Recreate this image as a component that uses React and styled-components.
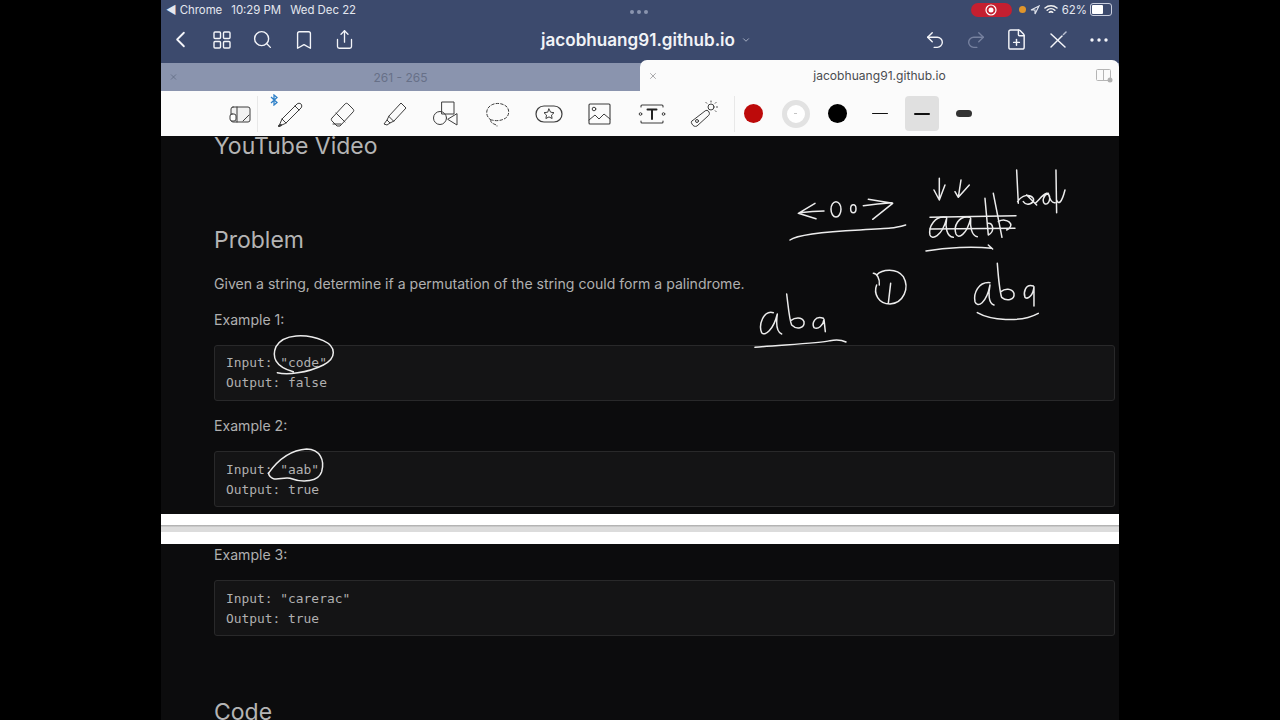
import React from "react";
import styled, { createGlobalStyle } from "styled-components";
import { ChevronLeft, Search, Bookmark, Share, Undo2, Redo2, FilePlus, X, ChevronDown } from "lucide-react";

const Global = createGlobalStyle`
    html, body { margin: 0; padding: 0; background: #000; }
    body { font-family: "Inter", "Liberation Sans", sans-serif; overflow: hidden; }
`;

const Screen = styled.div`
    width: 958px;
    height: 720px;
    margin: 0 auto;
    display: flex;
    flex-direction: column;
    overflow: hidden;
`;

const StatusBar = styled.div`
    height: 20px;
    flex: none;
    box-sizing: border-box;
    background: #3c4a6d;
    color: #e4e7ef;
    font-size: 11.4px;
    display: grid;
    grid-template-columns: 1fr auto 1fr;
    align-items: center;
    padding: 0 7px 1px 5px;
`;
const StatusLeft = styled.div`
    display: flex;
    gap: 9px;
    white-space: nowrap;
`;
const StatusRight = styled.div`
    display: flex;
    justify-content: flex-end;
    align-items: center;
    gap: 4px;
`;
const Dots = styled.div`
    display: flex;
    gap: 3px;
    margin-top: 5px;
    span {
        width: 4px;
        height: 4px;
        border-radius: 50%;
        background: #8a94ae;
    }
`;
const RecordPill = styled.div`
    width: 41px;
    height: 14px;
    border-radius: 7px;
    background: #c41f30;
    display: flex;
    align-items: center;
    justify-content: center;
    margin-right: 3px;
`;
const OrangeDot = styled.div`
    width: 7px;
    height: 7px;
    border-radius: 50%;
    background: #e0952b;
`;
const Battery = styled.div`
    width: 18px;
    height: 9px;
    border: 1px solid #c9cede;
    border-radius: 3px;
    padding: 1px;
    box-sizing: content-box;
    margin-left: -1px;
    div {
        width: 62%;
        height: 100%;
        background: #fff;
        border-radius: 1px;
    }
`;

const NavBar = styled.div`
    height: 43px;
    flex: none;
    box-sizing: border-box;
    padding-bottom: 4px;
    background: #3c4a6d;
    display: grid;
    grid-template-columns: 1fr auto 1fr;
    align-items: center;
    color: #fff;
`;
const NavGroup = styled.div`
    display: flex;
    justify-content: ${(p) => (p.$end ? "flex-end" : "flex-start")};
    margin-left: ${(p) => (p.$end ? 0 : -1)}px;
`;
const NavIcon = styled.div`
    width: 41px;
    height: 30px;
    display: flex;
    align-items: center;
    justify-content: center;
    color: ${(p) => (p.$dim ? "#76819f" : "#f4f5f9")};
`;
const Title = styled.div`
    font-size: 17.1px;
    font-weight: 600;
    color: #f1f3f7;
    display: flex;
    align-items: center;
    gap: 6px;
    margin-left: 12px;
`;

const TabRow = styled.div`
    height: 28px;
    flex: none;
    background: #8a94ae;
    display: grid;
    grid-template-columns: 479px 479px;
`;
const Tab = styled.div`
    position: relative;
    font-size: ${(p) => (p.$active ? "12.1px" : "12px")};
    display: flex;
    align-items: center;
    justify-content: center;
    color: ${(p) => (p.$active ? "#4a4c50" : "#677088")};
    background: ${(p) => (p.$active ? "#fbfbfb" : "transparent")};
    border-radius: ${(p) => (p.$active ? "7px 7px 0 0" : "0")};
    margin-top: ${(p) => (p.$active ? "-3px" : "0")};
`;
const TabClose = styled.span`
    position: absolute;
    left: 8px;
    top: 50%;
    transform: translateY(-50%);
    display: flex;
    color: ${(p) => (p.$active ? "#9a9a9c" : "#5f6880")};
`;
const SplitIcon = styled.svg`
    position: absolute;
    right: 6px;
    top: 8px;
`;

const ToolBar = styled.div`
    height: 45px;
    flex: none;
    background: #fbfbfb;
    display: flex;
    align-items: center;
    padding-left: 52px;
`;
const Tool = styled.div`
    position: relative;
    width: 51.67px;
    height: 36px;
    display: flex;
    align-items: center;
    justify-content: center;
    &::after {
        content: "";
        display: ${(p) => (p.$rule === undefined ? "none" : "block")};
        position: absolute;
        top: 0;
        bottom: 0;
        right: ${(p) => p.$rule}px;
        width: 1px;
        background: #e8e8e8;
    }
`;
const BlueTooth = styled.svg`
    position: absolute;
    left: 5px;
    top: -2px;
`;
const Swatches = styled.div`
    display: flex;
    margin-left: 3px;
`;
const Swatch = styled.div`
    width: 34px;
    height: 35px;
    margin: 0 4px;
    display: flex;
    align-items: center;
    justify-content: center;
    border-radius: 4px;
    background: ${(p) => (p.$selected ? "#e0e0e0" : "transparent")};
`;
const Dot = styled.div`
    width: 19px;
    height: 19px;
    border-radius: 50%;
    background: ${(p) => p.$color};
`;
const Ring = styled.div`
    width: 18px;
    height: 18px;
    border-radius: 50%;
    background: #fff;
    border: 5px solid #e2e2e2;
    display: flex;
    align-items: center;
    justify-content: center;
    &::before {
        content: "";
        width: 3px;
        height: 1px;
        background: #c4c4c4;
    }
`;
const Stroke = styled.div`
    width: ${(p) => p.$w}px;
    height: ${(p) => p.$h}px;
    border-radius: ${(p) => p.$h / 2}px;
    background: ${(p) => p.$color || "#111"};
`;

const Sheet = styled.div`
    position: relative;
    height: ${(p) => p.$h}px;
    flex: none;
    overflow: hidden;
    background: #0c0c0d;
    padding: 0 4px 0 53px;
    box-sizing: border-box;
`;
const Heading = styled.div`
    font-size: 23px;
    line-height: 30px;
    color: #b4b4b4;
    margin-top: ${(p) => p.$top}px;
`;
const Para = styled.div`
    font-size: 14.08px;
    line-height: 20px;
    color: #b0b0b0;
    margin-top: ${(p) => p.$top}px;
`;
const CodeBox = styled.pre`
    margin: ${(p) => p.$top}px 0 0;
    height: 56px;
    box-sizing: border-box;
    padding: ${(p) => p.$pad}px 11px 0;
    background: #141415;
    border: 1px solid #29292a;
    border-radius: 3px;
    font-family: "DejaVu Sans Mono", "Liberation Mono", monospace;
    font-size: 12.9px;
    line-height: 20px;
    color: #b0b0b0;
`;
const Ink = styled.svg`
    position: absolute;
    left: 0;
    top: 0;
    fill: none;
    stroke: #ececec;
    stroke-linecap: round;
    stroke-linejoin: round;
    pointer-events: none;
`;

const PageBreak = styled.div`
    height: 30px;
    flex: none;
    background: #fff;
    display: flex;
    flex-direction: column;
    padding-top: 11px;
    box-sizing: border-box;
    div {
        height: 7px;
        background: linear-gradient(#a9a9a9, #dcdcdc 35%, #dcdcdc);
    }
`;

const GridIcon = () => (
    <svg width="18" height="18" viewBox="0 0 18 18" fill="none" stroke="currentColor" strokeWidth="1.4">
        <rect x="1" y="1" width="6.5" height="6.5" rx="1" />
        <rect x="10.5" y="1" width="6.5" height="6.5" rx="1" />
        <rect x="1" y="10.5" width="6.5" height="6.5" rx="1" />
        <rect x="10.5" y="10.5" width="6.5" height="6.5" rx="1" />
    </svg>
);

const MoreIcon = () => (
    <svg width="18" height="4" viewBox="0 0 18 4" fill="currentColor">
        <circle cx="2" cy="2" r="1.7" />
        <circle cx="9" cy="2" r="1.7" />
        <circle cx="16" cy="2" r="1.7" />
    </svg>
);

const CrossIcon = () => (
    <svg width="18" height="18" viewBox="0 0 18 18" fill="none" stroke="currentColor" strokeWidth="1.5" strokeLinecap="round">
        <path d="M2 3 L16 16" />
        <path d="M2 16 L13 5" />
        <path d="M14.5 3.5 L17 1" stroke="#b9c0d2" />
    </svg>
);

const ToolIcon = ({ children }) => (
    <svg width="28" height="28" viewBox="0 0 28 28" fill="none" stroke="#3d3d3d" strokeWidth="1" strokeLinecap="round" strokeLinejoin="round">
        {children}
    </svg>
);

const Scribbles = () => (
    <Ink width="958" height="378" viewBox="161 136 958 378">
        <g transform="translate(740 160) scale(.3333)" strokeWidth="4.5">
            <path d="M225 130L175 160L228 176M178 158C200 156 225 154 252 153" />
            <ellipse cx="288" cy="148" rx="15" ry="23" />
            <ellipse cx="340" cy="146" rx="8" ry="12" />
            <path d="M370 137C400 133 430 130 456 128M385 118L458 130L398 178" />
            <path d="M150 240C170 225 260 215 360 210S460 205 497 195" />
            <path d="M598 55L598 118M582 90L598 120L615 75M663 60L655 112M645 95L655 112L688 75" />
            <path d="M620 172C585 165 565 200 570 225C575 240 605 232 620 175C615 200 620 230 640 232" />
            <path d="M690 172C655 165 640 200 648 222C655 238 680 225 692 175C690 200 695 228 712 230" />
            <path d="M735 115L745 225M745 190C760 190 765 215 745 225M760 100L786 232M775 185C800 170 830 195 800 210" />
            <path d="M570 172L828 167M570 207L825 205" />
            <path d="M558 273C620 262 700 258 755 265M745 255L758 267" />
            <path d="M830 30L835 130M833 125C845 105 870 100 880 115C885 130 860 140 850 125M860 105L890 135M885 130C895 125 905 105 920 100C935 105 930 135 915 132C905 125 910 105 925 100C930 120 935 130 945 128M948 30L950 158M950 120C955 135 965 130 975 90" />
            <path d="M410 345C425 328 470 322 490 350C510 385 490 430 450 432C415 432 400 400 410 375M400 340C410 340 420 355 418 375M452 370L445 430" />
            <path d="M750 368C715 365 700 400 705 425C712 445 740 430 750 375C745 400 745 430 762 435" />
            <path d="M772 310C775 350 778 390 785 412C800 425 825 420 822 400C815 385 795 385 783 395" />
            <path d="M880 378C855 370 850 400 855 412C865 420 880 405 882 380L882 438" />
            <path d="M712 458C750 480 840 490 895 460" />
            <path d="M100 458C70 450 55 495 65 518C75 530 100 510 112 462C108 490 108 515 125 522" />
            <path d="M140 402C145 440 148 480 155 495C170 510 195 505 192 485C185 470 165 472 152 482" />
            <path d="M250 475C225 465 215 490 222 503C235 510 250 495 252 478L256 515" />
            <path d="M45 562C120 555 240 550 270 542C290 538 310 542 318 546" />
        </g>
        <g transform="translate(200 330) scale(.3333)" strokeWidth="4.5">
            <path d="M232 128C260 135 320 130 370 105C410 85 410 50 370 32C320 10 250 10 228 50C215 80 225 110 280 125" />
            <path d="M205 430C230 395 270 360 320 357C360 358 375 390 365 425C355 455 310 460 270 445C245 440 215 460 205 430Z" />
        </g>
    </Ink>
);

const App = () => (
    <>
        <Global />
        <Screen>
            <StatusBar>
                <StatusLeft>
                    <span>◀ Chrome</span>
                    <span>10:29 PM</span>
                    <span>Wed Dec 22</span>
                </StatusLeft>
                <Dots>
                    <span />
                    <span />
                    <span />
                </Dots>
                <StatusRight>
                    <RecordPill>
                        <svg width="12" height="12" viewBox="0 0 12 12" fill="none" stroke="#fff">
                            <circle cx="6" cy="6" r="5" strokeWidth="1.2" />
                            <circle cx="6" cy="6" r="2.5" fill="#fff" stroke="none" />
                        </svg>
                    </RecordPill>
                    <OrangeDot />
                    <svg width="10" height="10" viewBox="0 0 10 10" fill="none" stroke="#e4e7ef" strokeWidth="1.1">
                        <path d="M9 1L1 5h4v4z" />
                    </svg>
                    <svg width="14" height="11" viewBox="0 0 14 11" fill="none" stroke="#f2f2f2" strokeWidth="1.5" strokeLinecap="round">
                        <path d="M1 4c3.5-3 8.5-3 12 0M3.2 6.3c2.2-2 5.400-2 7.600 0M5.300 8.300c1-.8 2.400-.8 3.400 0" />
                    </svg>
                    <span>62%</span>
                    <Battery>
                        <div />
                    </Battery>
                </StatusRight>
            </StatusBar>
            <NavBar>
                <NavGroup>
                    <NavIcon>
                        <ChevronLeft size={27} strokeWidth={1.6} />
                    </NavIcon>
                    <NavIcon>
                        <GridIcon />
                    </NavIcon>
                    <NavIcon>
                        <Search size={21} strokeWidth={1.6} />
                    </NavIcon>
                    <NavIcon>
                        <Bookmark size={22} strokeWidth={1.5} />
                    </NavIcon>
                    <NavIcon>
                        <Share size={21} strokeWidth={1.5} />
                    </NavIcon>
                </NavGroup>
                <Title>
                    jacobhuang91.github.io
                    <ChevronDown size={10} strokeWidth={2} color="#b8bfd0" />
                </Title>
                <NavGroup $end>
                    <NavIcon>
                        <Undo2 size={22} strokeWidth={1.5} />
                    </NavIcon>
                    <NavIcon $dim>
                        <Redo2 size={22} strokeWidth={1.5} />
                    </NavIcon>
                    <NavIcon>
                        <FilePlus size={23} strokeWidth={1.5} />
                    </NavIcon>
                    <NavIcon>
                        <CrossIcon />
                    </NavIcon>
                    <NavIcon>
                        <MoreIcon />
                    </NavIcon>
                </NavGroup>
            </NavBar>
            <TabRow>
                <Tab>
                    <TabClose>
                        <X size={9} />
                    </TabClose>
                    261 - 265
                </Tab>
                <Tab $active>
                    <TabClose $active>
                        <X size={10} />
                    </TabClose>
                    jacobhuang91.github.io
                    <SplitIcon width="17" height="15" viewBox="0 0 17 15" fill="none" stroke="#b5b5b5">
                        <rect x="0.5" y="1.5" width="14" height="11" rx="1" />
                        <path d="M7.5 1.5v11" />
                        <circle cx="14" cy="12" r="2.5" fill="#b0b0b0" stroke="none" />
                    </SplitIcon>
                </Tab>
            </TabRow>
            <ToolBar>
                <Tool $rule={7}>
                    <ToolIcon>
                        <rect x="6" y="7" width="19" height="15" rx="2" fill="#f1f1f1" />
                        <rect x="5" y="14" width="6" height="7" rx="2" fill="#fff" />
                        <path d="M12 7v15M18 21l6-6" />
                    </ToolIcon>
                </Tool>
                <Tool>
                    <BlueTooth width="8" height="12" viewBox="0 0 8 12" fill="none" stroke="#2f80c8" strokeWidth="1.3">
                        <path d="M1 3l6 5.500L4 11V1l3 2.500L1 9" />
                    </BlueTooth>
                    <ToolIcon>
                        <path d="M3 26l3-7L21 4c1-1 3-1 4 0s1 3 0 4L10 23z" />
                        <path d="M6 19l4 4M19 6l4 4" />
                        <path d="M3 26l2-1" strokeWidth="2" />
                    </ToolIcon>
                </Tool>
                <Tool>
                    <ToolIcon>
                        <path d="M4 18L17 4c1-1 2-1 3 0l5 5c1 1 1 2 0 3L12 26H9l-5-5c-1-1-1-2 0-3z" />
                        <path d="M8 13l9 9M5 24h8" />
                    </ToolIcon>
                </Tool>
                <Tool>
                    <ToolIcon>
                        <path d="M9 16L21 3l5 5-12 13z" />
                        <path d="M9 16l-2 4 3 3 4-2M7 20l-3 4 3 1 3-2" />
                    </ToolIcon>
                </Tool>
                <Tool>
                    <ToolIcon>
                        <rect x="11" y="2" width="12" height="12" />
                        <circle cx="9" cy="18" r="6.5" />
                        <path d="M26 14v11l-9-5.500z" />
                    </ToolIcon>
                </Tool>
                <Tool>
                    <ToolIcon>
                        <path d="M8 20C3 17 2 10 7 6c5-4 13-3 17 1 3 4 2 10-3 12-4 2-9 2-12 1" strokeDasharray="2.6 2" />
                        <path d="M8 20c-1 2 1 3 3 4s3 1 3 2" strokeDasharray="2.6 2" />
                    </ToolIcon>
                </Tool>
                <Tool>
                    <ToolIcon>
                        <path d="M9 6h10c5 0 8 4 8 8s-3 8-8 8H9c-5 0-8-4-8-8s3-8 8-8z" strokeWidth="1.2" />
                        <path d="M14 9l1.600 3.200 3.400.5-2.500 2.400.6 3.400-3.100-1.600-3.100 1.600.6-3.400L9 12.700l3.400-.5z" />
                    </ToolIcon>
                </Tool>
                <Tool>
                    <ToolIcon>
                        <rect x="3" y="4" width="21" height="20" rx="1" strokeWidth="1.1" />
                        <circle cx="8" cy="9" r="1.800" />
                        <path d="M3 20l6-5 4 4 5-5 6 5" />
                    </ToolIcon>
                </Tool>
                <Tool>
                    <ToolIcon>
                        <path d="M3 7V6a1 1 0 0 1 1-1h20a1 1 0 0 1 1 1v1M3 21v1a1 1 0 0 0 1 1h20a1 1 0 0 0 1-1v-1" strokeWidth="1.1" />
                        <circle cx="2.500" cy="14" r="1.300" />
                        <circle cx="25.500" cy="14" r="1.300" />
                        <path d="M9.500 9.500h9M14 9.500v9.500" strokeWidth="2" stroke="#222" />
                    </ToolIcon>
                </Tool>
                <Tool $rule={-5}>
                    <ToolIcon>
                        <path d="M2 21L15 11c1-1 3-1 4 1s0 3-1 4L7 26c-2 1-4 0-5-2s-1-2 0-3z" />
                        <circle cx="7" cy="21" r="1.500" />
                        <circle cx="21" cy="7" r="3" />
                        <path d="M21 1v1.500M26 2.500l-1 1M27.500 7H26M26 11.500l-1-1M16 2.500l1 1" strokeDasharray="1 .6" />
                    </ToolIcon>
                </Tool>
                <Swatches>
                    <Swatch>
                        <Dot $color="#bd0a0a" />
                    </Swatch>
                    <Swatch>
                        <Ring />
                    </Swatch>
                    <Swatch>
                        <Dot $color="#000" />
                    </Swatch>
                    <Swatch>
                        <Stroke $w={16} $h={1.5} />
                    </Swatch>
                    <Swatch $selected>
                        <Stroke $w={16} $h={2} />
                    </Swatch>
                    <Swatch>
                        <Stroke $w={16} $h={7} $color="#333" />
                    </Swatch>
                </Swatches>
            </ToolBar>
            <Sheet $h={378}>
                <Heading $top={-5}>YouTube Video</Heading>
                <Heading $top={64}>Problem</Heading>
                <Para $top={19}>Given a string, determine if a permutation of the string could form a palindrome.</Para>
                <Para $top={16}>Example 1:</Para>
                <CodeBox $top={15} $pad={7}>{'Input: "code"\nOutput: false'}</CodeBox>
                <Para $top={15}>Example 2:</Para>
                <CodeBox $top={15} $pad={8}>{'Input: "aab"\nOutput: true'}</CodeBox>
                <Scribbles />
            </Sheet>
            <PageBreak>
                <div />
            </PageBreak>
            <Sheet $h={176}>
                <Para $top={1}>Example 3:</Para>
                <CodeBox $top={15} $pad={8}>{'Input: "carerac"\nOutput: true'}</CodeBox>
                <Heading $top={61}>Code</Heading>
            </Sheet>
        </Screen>
    </>
);

export default App;
